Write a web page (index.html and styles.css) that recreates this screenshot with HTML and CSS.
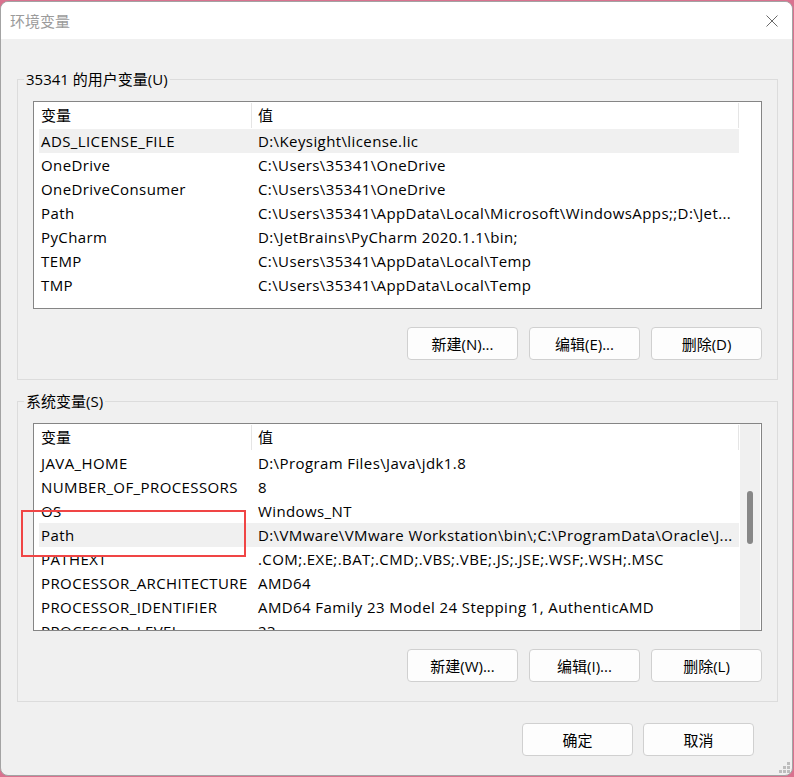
FILE: index.html
```html
<!DOCTYPE html>
<html lang="zh-CN">
<head>
  <meta charset="UTF-8">
  <title>环境变量</title>
  <link rel="stylesheet" href="styles.css">
</head>
<body>
  <div class="window">
    <div class="titlebar">
      <span class="title">环境变量</span>
      <svg class="close" width="12" height="12" viewBox="0 0 12 12">
        <path d="M0.5 0.5 L11.5 11.5 M11.5 0.5 L0.5 11.5" stroke="#6a6a6a" stroke-width="1" fill="none"/>
      </svg>
    </div>

    <div class="content">
      <fieldset class="group">
        <legend>35341 的用户变量(U)</legend>
        <div class="listbox">
          <div class="list-main">
            <div class="list-head">
              <div class="head-cell name">变量</div>
              <div class="head-cell value">值</div>
            </div>
            <div class="row selected"><div class="name">ADS_LICENSE_FILE</div><div class="value">D:\Keysight\license.lic</div></div>
            <div class="row"><div class="name">OneDrive</div><div class="value">C:\Users\35341\OneDrive</div></div>
            <div class="row"><div class="name">OneDriveConsumer</div><div class="value">C:\Users\35341\OneDrive</div></div>
            <div class="row"><div class="name">Path</div><div class="value">C:\Users\35341\AppData\Local\Microsoft\WindowsApps;;D:\Jet...</div></div>
            <div class="row"><div class="name">PyCharm</div><div class="value">D:\JetBrains\PyCharm 2020.1.1\bin;</div></div>
            <div class="row"><div class="name">TEMP</div><div class="value">C:\Users\35341\AppData\Local\Temp</div></div>
            <div class="row"><div class="name">TMP</div><div class="value">C:\Users\35341\AppData\Local\Temp</div></div>
          </div>
        </div>
        <div class="btn-row">
          <button class="btn">新建(N)...</button>
          <button class="btn">编辑(E)...</button>
          <button class="btn">删除(D)</button>
        </div>
      </fieldset>

      <fieldset class="group system">
        <legend>系统变量(S)</legend>
        <div class="listbox">
          <div class="list-main">
            <div class="list-head">
              <div class="head-cell name">变量</div>
              <div class="head-cell value">值</div>
            </div>
            <div class="row"><div class="name">JAVA_HOME</div><div class="value">D:\Program Files\Java\jdk1.8</div></div>
            <div class="row"><div class="name">NUMBER_OF_PROCESSORS</div><div class="value">8</div></div>
            <div class="row"><div class="name">OS</div><div class="value">Windows_NT</div></div>
            <div class="row selected"><div class="name">Path</div><div class="value">D:\VMware\VMware Workstation\bin\;C:\ProgramData\Oracle\J...</div></div>
            <div class="row"><div class="name">PATHEXT</div><div class="value">.COM;.EXE;.BAT;.CMD;.VBS;.VBE;.JS;.JSE;.WSF;.WSH;.MSC</div></div>
            <div class="row"><div class="name">PROCESSOR_ARCHITECTURE</div><div class="value">AMD64</div></div>
            <div class="row"><div class="name">PROCESSOR_IDENTIFIER</div><div class="value">AMD64 Family 23 Model 24 Stepping 1, AuthenticAMD</div></div>
            <div class="row"><div class="name">PROCESSOR_LEVEL</div><div class="value">23</div></div>
          </div>
          <div class="scroll-track"><div class="scroll-thumb"></div></div>
        </div>
        <div class="btn-row">
          <button class="btn">新建(W)...</button>
          <button class="btn">编辑(I)...</button>
          <button class="btn">删除(L)</button>
        </div>
      </fieldset>

      <div class="dialog-btns">
        <button class="btn">确定</button>
        <button class="btn">取消</button>
      </div>
    </div>

    <div class="mark"></div>
    <svg class="grip" width="11" height="11" viewBox="0 0 11 11">
      <rect x="8" y="0" width="3" height="3" fill="#bdbdbd"/>
      <rect x="4" y="4" width="3" height="3" fill="#bdbdbd"/>
      <rect x="8" y="4" width="3" height="3" fill="#bdbdbd"/>
      <rect x="0" y="8" width="3" height="3" fill="#bdbdbd"/>
      <rect x="4" y="8" width="3" height="3" fill="#bdbdbd"/>
      <rect x="8" y="8" width="3" height="3" fill="#bdbdbd"/>
    </svg>
  </div>
</body>
</html>
```

FILE: styles.css
```css
body {
  margin: 0;
  padding-top: 1px;
  background: #d9728f;
  font-family: "Open Sans", "Noto Sans CJK SC", sans-serif;
  font-size: 15px;
  color: #000;
}

.window {
  position: relative;
  width: 793px;
  height: 775px;
  box-sizing: border-box;
  border: 1px solid #a3a3a3;
  border-radius: 8px;
  background: #f0f0f0;
  overflow: hidden;
}

.titlebar {
  height: 37px;
  background: #fff;
  display: flex;
  align-items: center;
  justify-content: space-between;
  padding: 0 14px 0 9px;
}

.title {
  font-family: "Noto Sans CJK SC", sans-serif;
  font-size: 15px;
  color: #9b9b9b;
}

.content {
  padding: 30px 14px 0 16px;
}

.group {
  width: 761px;
  box-sizing: border-box;
  margin: 0;
  padding: 12px 15px 19px;
  border: 1px solid #dcdcdc;
}

.group legend {
  margin-left: -9px;
  padding: 0 2px;
  line-height: 20px;
}

.group.system {
  margin-top: 11px;
}

.listbox {
  display: flex;
  height: 208px;
  box-sizing: border-box;
  padding-left: 5px;
  border: 1px solid #858585;
  background: #fff;
  overflow: hidden;
}

.list-main {
  width: 700px;
  flex-shrink: 0;
}

.list-head {
  display: flex;
  height: 27px;
  padding-top: 1px;
  box-sizing: border-box;
}

.head-cell {
  height: 25px;
  line-height: 25px;
  border-right: 1px solid #e5e5e5;
  box-sizing: border-box;
}

.row {
  display: flex;
  height: 24px;
  line-height: 24px;
  letter-spacing: 0.4px;
}

.row.selected {
  background: #f0f0f0;
}

.name {
  width: 213px;
  flex-shrink: 0;
  padding-left: 2px;
  box-sizing: border-box;
  white-space: nowrap;
  overflow: hidden;
}

.value {
  flex: 1;
  padding-left: 6px;
  white-space: nowrap;
  overflow: hidden;
}

.scroll-track {
  width: 20px;
  margin-left: 1px;
  padding-top: 67px;
  background: #f0f0f0;
}

.scroll-thumb {
  width: 6px;
  height: 53px;
  margin-left: 7px;
  border-radius: 3px;
  background: #878787;
}

.btn-row {
  display: flex;
  justify-content: flex-end;
  gap: 11px;
  margin-top: 18px;
}

.btn {
  width: 111px;
  height: 33px;
  padding: 0;
  font-family: inherit;
  font-size: 15px;
  color: #000;
  background: #fdfdfd;
  border: 1px solid #d0d0d0;
  border-radius: 4px;
}

.dialog-btns {
  display: flex;
  justify-content: flex-end;
  gap: 10px;
  margin-top: 21px;
  padding-right: 24px;
}

/* red annotation frame around the Path row */
.mark {
  position: absolute;
  left: 20px;
  top: 508px;
  width: 225px;
  height: 47px;
  box-sizing: border-box;
  border: 2px solid #f04545;
}

.grip {
  position: absolute;
  right: 2px;
  bottom: 2px;
}
```
